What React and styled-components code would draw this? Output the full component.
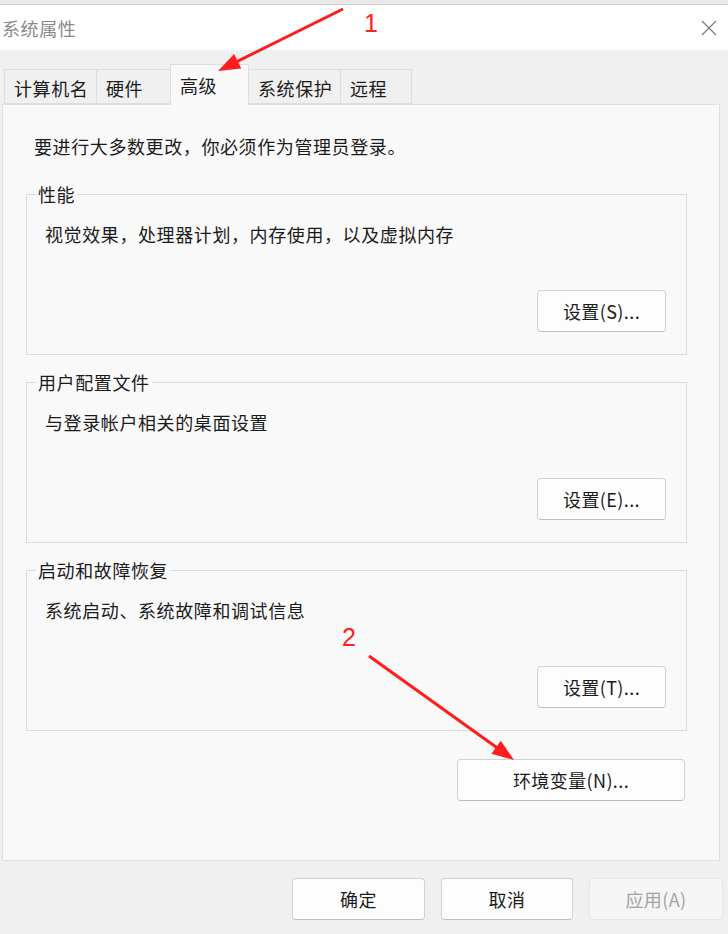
import React from 'react';
import styled, { createGlobalStyle } from 'styled-components';

const GlobalStyle = createGlobalStyle`
  html, body {
    margin: 0;
    padding: 0;
    background: #f0f0f0;
  }
  * {
    box-sizing: border-box;
  }
`;

const FONT = `"Noto Sans CJK SC", "Noto Sans", sans-serif`;

const Window = styled.div`
  position: relative;
  width: 728px;
  height: 934px;
  display: flex;
  flex-direction: column;
  background: #f0f0f0;
  font-family: ${FONT};
  font-size: 18px;
  letter-spacing: 0.6px;
  color: #1b1b1b;
  overflow: hidden;
`;

const TopStrip = styled.div`
  height: 5px;
  background: #e9e9e9;
  border-bottom: 1px solid #d2d2d2;
`;

const TitleBar = styled.div`
  height: 45px;
  background: #ffffff;
  display: flex;
  align-items: center;
  justify-content: space-between;
  padding: 0 10px 0 2px;
`;

const Title = styled.span`
  color: #8a8a8a;
  font-size: 18px;
  line-height: 24px;
`;

const CloseIcon = styled.svg`
  width: 18px;
  height: 18px;
`;

const Content = styled.div`
  flex: 1;
  display: flex;
  flex-direction: column;
  padding: 14px 8px 0 2px;
`;

const TabRow = styled.div`
  display: flex;
  align-items: flex-end;
  padding-left: 2px;
  position: relative;
  z-index: 1;
`;

const Tab = styled.div`
  width: ${(p) => p.$w}px;
  height: ${(p) => (p.$active ? 41 : 35)}px;
  margin-right: -1px;
  margin-bottom: ${(p) => (p.$active ? -1 : 0)}px;
  padding: ${(p) => (p.$active ? '0' : '2px')} 0 0 9px;
  display: flex;
  align-items: center;
  line-height: 24px;
  background: ${(p) => (p.$active ? '#f9f9f9' : '#f0f0f0')};
  border: 1px solid #dedede;
  border-bottom: ${(p) => (p.$active ? 'none' : '1px solid #dedede')};
  position: relative;
  z-index: ${(p) => (p.$active ? 2 : 1)};
`;

const Panel = styled.div`
  height: 757px;
  display: flex;
  flex-direction: column;
  background: #f9f9f9;
  border: 1px solid #dfdfdf;
  padding: 29px 32px 0 23px;
`;

const Intro = styled.p`
  margin: 0 0 0 8px;
  line-height: 24px;
`;

const Group = styled.fieldset`
  margin: ${(p) => (p.$first ? 24 : 15)}px 0 0 0;
  padding: 16px 20px 22px 18px;
  border: 1px solid #dcdcdc;
  min-width: 0;
  display: flex;
  flex-direction: column;
`;

const Legend = styled.legend`
  margin-left: -9px;
  padding: 0 2px;
  line-height: 24px;
  font-size: 18px;
`;

const Desc = styled.div`
  line-height: 24px;
`;

const Button = styled.button`
  font-family: ${FONT};
  font-size: 18px;
  letter-spacing: 0.4px;
  color: ${(p) => (p.disabled ? '#a3a3a3' : '#1b1b1b')};
  width: ${(p) => p.$w}px;
  height: 42px;
  padding: 0;
  background: ${(p) => (p.disabled ? '#f5f5f5' : '#fdfdfd')};
  border: 1px solid ${(p) => (p.disabled ? '#e6e6e6' : '#d2d2d2')};
  border-bottom-color: ${(p) => (p.disabled ? '#e6e6e6' : '#bdbdbd')};
  border-radius: 4px;
  line-height: 24px;
  align-self: flex-end;
  flex: none;
`;

const GroupButton = styled(Button)`
  margin-top: 44px;
`;

const EnvButton = styled(Button)`
  margin: 28px 2px 0 0;
`;

const Footer = styled.div`
  display: flex;
  justify-content: flex-end;
  gap: 16px;
  padding-top: 17px;
  margin-right: -3px;
`;

const Overlay = styled.svg`
  position: absolute;
  left: 0;
  top: 0;
  width: 728px;
  height: 934px;
  pointer-events: none;
  z-index: 5;
`;

const Mark = styled.text`
  font-family: "Liberation Sans", "Noto Sans", sans-serif;
  font-size: 25px;
  fill: #ff2020;
`;

function Arrow({ x1, y1, x2, y2 }) {
  const dx = x2 - x1;
  const dy = y2 - y1;
  const len = Math.hypot(dx, dy);
  const ux = dx / len;
  const uy = dy / len;
  const hl = 22;
  const hw = 8;
  const bx = x2 - ux * hl;
  const by = y2 - uy * hl;
  const px = -uy;
  const py = ux;
  return (
    <g>
      <line x1={x1} y1={y1} x2={bx + ux * 2} y2={by + uy * 2} stroke="#ff1c1c" strokeWidth="3" />
      <polygon
        points={`${x2},${y2} ${bx + px * hw},${by + py * hw} ${bx - px * hw},${by - py * hw}`}
        fill="#ff1c1c"
      />
    </g>
  );
}

const tabs = [
  { label: '计算机名', w: 93 },
  { label: '硬件', w: 75 },
  { label: '高级', w: 79, active: true },
  { label: '系统保护', w: 93 },
  { label: '远程', w: 72 },
];

const groups = [
  { title: '性能', desc: '视觉效果，处理器计划，内存使用，以及虚拟内存', btn: '设置(S)...' },
  { title: '用户配置文件', desc: '与登录帐户相关的桌面设置', btn: '设置(E)...' },
  { title: '启动和故障恢复', desc: '系统启动、系统故障和调试信息', btn: '设置(T)...' },
];

export default function App() {
  return (
    <>
      <GlobalStyle />
      <Window>
        <TopStrip />
        <TitleBar>
          <Title>系统属性</Title>
          <CloseIcon viewBox="0 0 18 18">
            <path d="M2 2 L16 16 M16 2 L2 16" stroke="#7a7a7a" strokeWidth="1.2" fill="none" />
          </CloseIcon>
        </TitleBar>
        <Content>
          <TabRow>
            {tabs.map((t) => (
              <Tab key={t.label} $w={t.w} $active={t.active}>
                {t.label}
              </Tab>
            ))}
          </TabRow>
          <Panel>
            <Intro>要进行大多数更改，你必须作为管理员登录。</Intro>
            {groups.map((g, i) => (
              <Group key={g.title} $first={i === 0}>
                <Legend>{g.title}</Legend>
                <Desc>{g.desc}</Desc>
                <GroupButton $w={129}>{g.btn}</GroupButton>
              </Group>
            ))}
            <EnvButton $w={228}>环境变量(N)...</EnvButton>
          </Panel>
          <Footer>
            <Button $w={133}>确定</Button>
            <Button $w={132}>取消</Button>
            <Button $w={134} disabled>
              应用(A)
            </Button>
          </Footer>
        </Content>
        <Overlay viewBox="0 0 728 934">
          <Mark x="364" y="32">1</Mark>
          <Arrow x1={343} y1={9} x2={218} y2={71} />
          <Mark x="342" y="646">2</Mark>
          <Arrow x1={369} y1={656} x2={514} y2={760} />
        </Overlay>
      </Window>
    </>
  );
}
